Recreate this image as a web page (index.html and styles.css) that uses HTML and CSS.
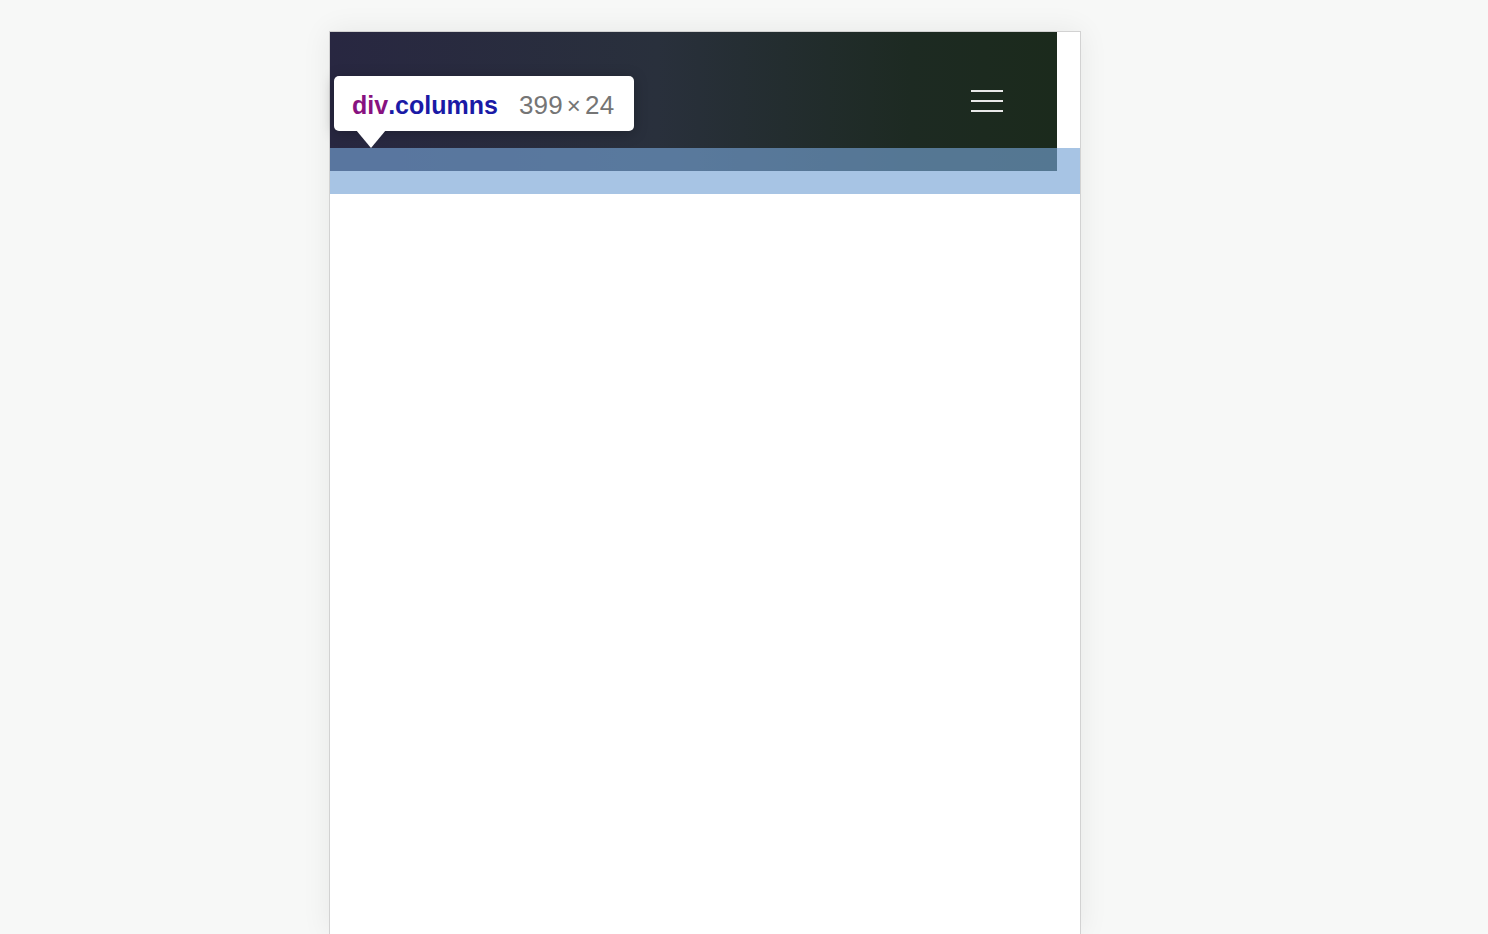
FILE: index.html
```html
<!DOCTYPE html>
<html>
<head>
<meta charset="utf-8">
<link rel="stylesheet" href="styles.css">
</head>
<body>
<div class="page">
  <div class="frame">
    <div class="header">
      <div class="burger"><span></span><span></span><span></span></div>
    </div>
    <div class="highlight"></div>
    <div class="tooltip">
      <span class="tag">div</span><span class="cls">.columns</span><span class="dims">399<span class="x">×</span>24</span>
      <div class="arrow"></div>
    </div>
  </div>
</div>
</body>
</html>
```

FILE: styles.css
```css
html, body {
  margin: 0;
  padding: 0;
  height: 100%;
  overflow: hidden;
}
body {
  background: #f7f8f7;
  font-family: "Liberation Sans", Arial, sans-serif;
}
.page {
  padding: 31px 0 0 329px;
}
.frame {
  position: relative;
  width: 752px;
  height: calc(100vh - 31px);
  box-sizing: border-box;
  background: #fff;
  border: 1px solid #d2d2d2;
  border-bottom: none;
  box-shadow: 0 0 28px rgba(0, 0, 0, 0.07);
}
.header {
  width: 727px;
  height: 139px;
  background: linear-gradient(90deg, #282741 0%, #29303c 45%, #1d2a22 80%, #1b2a1c 100%);
  display: flex;
  align-items: center;
  justify-content: flex-end;
  padding-right: 54px;
  box-sizing: border-box;
}
.burger {
  display: flex;
  flex-direction: column;
  gap: 8px;
  margin-top: -2px;
}
.burger span {
  display: block;
  width: 32px;
  height: 2px;
  background: #e8e8e8;
}
.highlight {
  position: absolute;
  left: 0;
  top: 116px;
  width: 750px;
  height: 46px;
  background: rgba(118, 163, 213, 0.64);
}
.tooltip {
  position: absolute;
  left: 4px;
  top: 44px;
  width: 300px;
  height: 55px;
  box-sizing: border-box;
  padding: 3px 0 0 18px;
  background: #fff;
  border-radius: 5px;
  box-shadow: 0 2px 14px rgba(0, 0, 0, 0.25);
  display: flex;
  align-items: center;
  font-size: 25px;
  line-height: 1;
  white-space: nowrap;
}
.tag {
  color: #881280;
  font-weight: bold;
}
.cls {
  color: #1a1aa6;
  font-weight: bold;
}
.dims {
  color: #757575;
  margin-left: 21px;
  font-size: 26px;
  letter-spacing: 0.2px;
}
.x {
  margin: 0 4px;
  font-size: 24px;
}
.arrow {
  position: absolute;
  left: 22px;
  top: 54px;
  width: 30px;
  height: 18px;
  background: #fff;
  clip-path: polygon(0 0, 100% 0, 50% 100%);
}
```
